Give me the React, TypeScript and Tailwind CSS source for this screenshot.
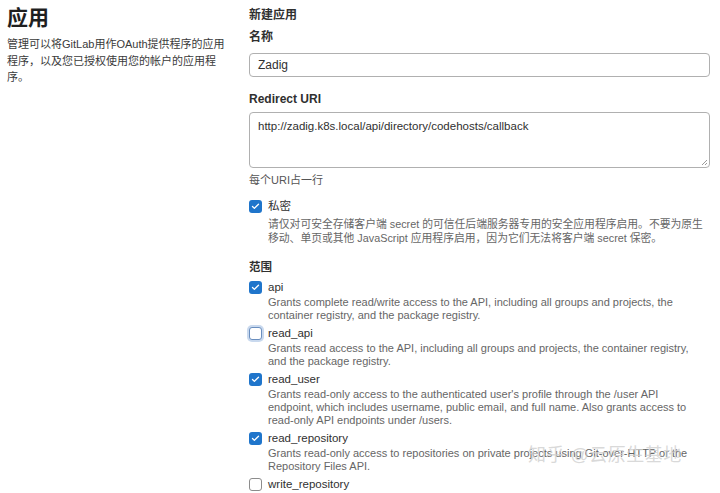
import { Check } from "lucide-react";

const font = { fontFamily: '"Liberation Sans", "Noto Sans CJK SC", sans-serif' };

interface Scope {
  name: string;
  checked: boolean;
  focus?: boolean;
  desc?: string;
}

const scopes: Scope[] = [
  {
    name: "api",
    checked: true,
    desc: "Grants complete read/write access to the API, including all groups and projects, the container registry, and the package registry.",
  },
  {
    name: "read_api",
    checked: false,
    focus: true,
    desc: "Grants read access to the API, including all groups and projects, the container registry, and the package registry.",
  },
  {
    name: "read_user",
    checked: true,
    desc: "Grants read-only access to the authenticated user's profile through the /user API endpoint, which includes username, public email, and full name. Also grants access to read-only API endpoints under /users.",
  },
  {
    name: "read_repository",
    checked: true,
    desc: "Grants read-only access to repositories on private projects using Git-over-HTTP or the Repository Files API.",
  },
  { name: "write_repository", checked: false },
];

const Box = ({ checked, focus }: { checked: boolean; focus?: boolean }) => (
  <span
    className={`mt-[2.5px] flex h-[13px] w-[13px] shrink-0 items-center justify-center rounded-[3px] ${
      checked
        ? "bg-[#1f75cb]"
        : focus
        ? "border border-[#6b8fbf] bg-white shadow-[0_0_0_2px_#c9d9ee]"
        : "border border-[#8c8c8c] bg-white"
    }`}
  >
    {checked && <Check size={9} strokeWidth={3.5} className="text-white" />}
  </span>
);

const App = () => {
  return (
    <div className="relative h-[493px] w-[720px] overflow-hidden bg-white text-[#303030]" style={font}>
      <div className="flex">
        <div className="w-[242px] shrink-0 pl-[7px] pt-[4px] pr-[14px]">
          <h2 className="text-[21px] font-bold leading-[28px] text-[#1f1f1f]">应用</h2>
          <p className="mt-[4px] text-[11px] leading-[16.5px] text-[#3a3a3a]">
            管理可以将GitLab用作OAuth提供程序的应用程序，以及您已授权使用您的帐户的应用程序。
          </p>
        </div>

        <div className="w-[468px] shrink-0 pl-[7px] pt-[7px]">
          <div className="text-[12px] font-semibold leading-[16px]">新建应用</div>

          <label className="mt-[6px] block text-[12px] font-bold leading-[16px]">名称</label>
          <div className="mt-[8px] flex h-[24px] items-center rounded-[4px] border border-[#b0b0b0] px-[8px] text-[12px]">
            Zadig
          </div>

          <label className="mt-[14px] block text-[12px] font-bold leading-[16px]">Redirect URI</label>
          <div className="relative mt-[5px] h-[56px] rounded-[4px] border border-[#b0b0b0] px-[8px] pt-[5px] text-[11.5px] leading-[16px]">
            http://zadig.k8s.local/api/directory/codehosts/callback
            <svg className="absolute bottom-[1px] right-[1px]" width="7" height="7" viewBox="0 0 7 7">
              <path d="M6 1L1 6M6 4L4 6" stroke="#9a9a9a" strokeWidth="1" />
            </svg>
          </div>
          <div className="mt-[4px] text-[11px] leading-[16px] text-[#555]">每个URI占一行</div>

          <div className="mt-[9px] flex gap-[6px]">
            <Box checked />
            <div>
              <div className="text-[11.5px] leading-[18px]">私密</div>
              <p className="mt-[2px] text-[10.8px] leading-[14px] text-[#666]">
                请仅对可安全存储客户端 secret 的可信任后端服务器专用的安全应用程序启用。不要为原生移动、单页或其他 JavaScript 应用程序启用，因为它们无法将客户端 secret 保密。
              </p>
            </div>
          </div>

          <div className="mt-[14px] text-[11.5px] font-semibold leading-[16px]">范围</div>
          <div className="mt-[3px] flex flex-col gap-[2px]">
            {scopes.map((s) => (
              <div key={s.name} className="flex gap-[6px]">
                <Box checked={s.checked} focus={s.focus} />
                <div className="pr-[6px]">
                  <div className="text-[11.5px] leading-[18px]">{s.name}</div>
                  {s.desc && (
                    <p className="text-[11px] leading-[13px] text-[#666]">{s.desc}</p>
                  )}
                </div>
              </div>
            ))}
          </div>
        </div>
      </div>

      <div className="absolute left-[528px] top-[443px] text-[18px] leading-[24px] tracking-[0.5px] text-[#cfcfcf]/80">
        知乎 @云原生基地
      </div>
    </div>
  );
};

export default App;
